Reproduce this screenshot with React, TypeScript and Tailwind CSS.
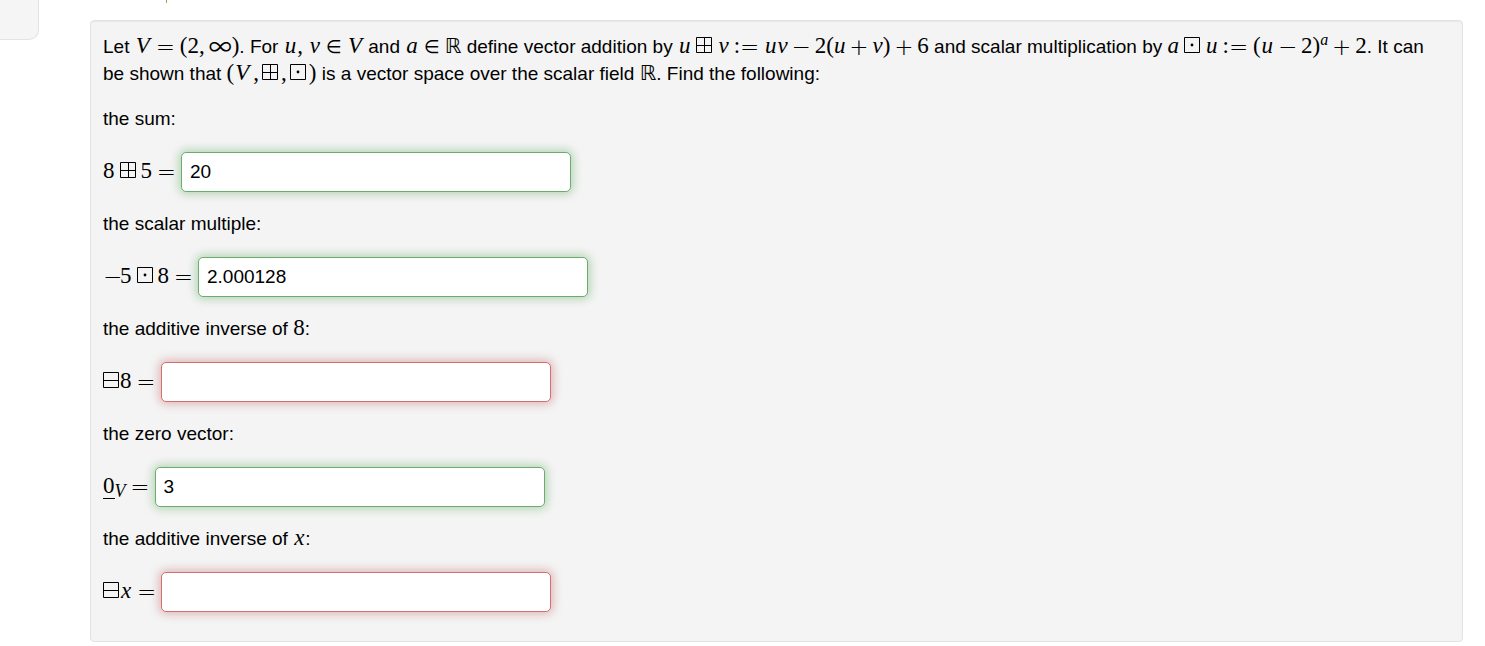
import React, { useState } from 'react';
import { clsx } from 'clsx';

type Children = { children: React.ReactNode };

function M({ children }: Children) {
  return (
    <span className="whitespace-nowrap font-['Liberation_Serif',serif] text-[23px] leading-none">
      {children}
    </span>
  );
}

function Var({ children }: Children) {
  return <i className="px-px">{children}</i>;
}

// Binary operator: + or −
function Bin({ children }: Children) {
  return (
    <span className="inline-block w-[27px] text-center align-[-2px] font-['DejaVu_Sans_Light','DejaVu_Sans',sans-serif] leading-none">
      {children}
    </span>
  );
}

function Eq() {
  return (
    <span className="inline-block w-[29px] text-center align-[-2px] font-['DejaVu_Sans_Light','DejaVu_Sans',sans-serif] leading-none">
      =
    </span>
  );
}

function Assign() {
  return (
    <>
      <span className="pl-1">:</span>
      <span className="inline-block w-6 align-[-2px] font-['DejaVu_Sans_Light','DejaVu_Sans',sans-serif] leading-none">=</span>
    </>
  );
}

function In() {
  return (
    <span className="inline-block w-[26px] text-center font-['DejaVu_Sans',sans-serif] text-[18px] leading-none">
      ∈
    </span>
  );
}

function Infinity() {
  return <span className="pl-1 align-[-2px] font-['Noto_Sans_CJK_SC',sans-serif] leading-none">∞</span>;
}

function Reals() {
  return <span className="font-['DejaVu_Sans',sans-serif] text-[21px] leading-none">ℝ</span>;
}

const shapes = {
  plus: { label: '⊞', path: 'M8.5 .5v15M.5 8.5h15' },
  minus: { label: '⊟', path: 'M.5 8.5h15' },
  dot: { label: '⊡', path: '' },
};

function Boxed({ op, className }: { op: keyof typeof shapes; className?: string }) {
  const shape = shapes[op];
  return (
    <svg
      role="img"
      aria-label={shape.label}
      viewBox="0 0 16 16"
      className={clsx('inline-block size-4 align-baseline', className)}
      fill="none"
      stroke="currentColor"
    >
      <path d="M.5.5h15v15H.5z" />
      {shape.path && <path d={shape.path} />}
      {op === 'dot' && <circle cx="8" cy="8" r="1.4" fill="currentColor" stroke="none" />}
    </svg>
  );
}

interface Question {
  id: string;
  prompt: React.ReactNode;
  lhs: React.ReactNode;
  answer: string;
  correct: boolean;
}

const questions: Question[] = [
  {
    id: 'sum',
    prompt: 'the sum:',
    lhs: <>8<Boxed op="plus" className="mx-[5px]" />5</>,
    answer: '20',
    correct: true,
  },
  {
    id: 'scalar-multiple',
    prompt: 'the scalar multiple:',
    lhs: (
      <>
        <span className="inline-block w-[17px] align-[-2px] font-['DejaVu_Sans_Light','DejaVu_Sans',sans-serif] leading-none">−</span>5
        <Boxed op="dot" className="mx-[5px]" />8
      </>
    ),
    answer: '2.000128',
    correct: true,
  },
  {
    id: 'inverse-8',
    prompt: <>the additive inverse of <M>8</M>:</>,
    lhs: <><Boxed op="minus" className="mr-px" />8</>,
    answer: '',
    correct: false,
  },
  {
    id: 'zero-vector',
    prompt: 'the zero vector:',
    lhs: (
      <>
        <span className="border-b border-black">0</span>
        <sub className="bottom-[-4px] text-[18px] italic">V</sub>
      </>
    ),
    answer: '3',
    correct: true,
  },
  {
    id: 'inverse-x',
    prompt: <>the additive inverse of <M><Var>x</Var></M>:</>,
    lhs: <><Boxed op="minus" className="mr-px" /><Var>x</Var></>,
    answer: '',
    correct: false,
  },
];

function AnswerRow({ question }: { question: Question }) {
  const [value, setValue] = useState(question.answer);

  return (
    <div className="flex items-center">
      <label htmlFor={question.id} className="shrink-0 pb-0.5">
        <M>
          {question.lhs}
          <Eq />
        </M>
      </label>
      <input
        id={question.id}
        type="text"
        value={value}
        onChange={(e) => setValue(e.target.value)}
        className={clsx(
          'h-10 w-[390px] min-w-0 rounded-[5px] border bg-white px-2 text-[19px] text-black outline-none',
          question.correct
            ? 'border-[#6aad6e] shadow-[0_0_10px_2px_rgba(81,163,81,0.4)]'
            : 'border-[#d07070] shadow-[0_0_10px_2px_rgba(191,84,84,0.4)]'
        )}
      />
    </div>
  );
}

export default function App() {
  return (
    <div className="flex items-start bg-white font-['Liberation_Sans',Arial,sans-serif] text-[19px] leading-[27px] text-black">
      <aside className="h-10 w-[39px] shrink-0 rounded-br-[10px] border-r border-b border-[#e3e3e3] bg-[#f5f5f5]" />

      <main className="mr-[22px] ml-[51px] min-w-0 flex-1">
        <div className="h-5 pl-[76px]">
          <div className="h-[3px] w-px bg-[#b8965a]" />
        </div>

        <section className="rounded border border-[#e3e3e3] bg-[#f4f4f4] pt-3 pr-5 pb-[29px] pl-3 shadow-[inset_0_1px_1px_rgba(0,0,0,0.05)]">
          <p>
            Let <M><Var>V</Var><Eq />(2,<Infinity />)</M>. For{' '}
            <M><Var>u</Var>,<Var> v</Var><In /><Var>V</Var></M> and{' '}
            <M><Var>a</Var><In /><Reals /></M> define vector addition by{' '}
            <M>
              <Var>u</Var><Boxed op="plus" className="mx-[5px]" /><Var>v</Var><Assign />
              <Var>u</Var><i>v</i><Bin>−</Bin>2(<i>u</i><Bin>+</Bin><i>v</i>)<Bin>+</Bin>6
            </M>{' '}
            and scalar multiplication by{' '}
            <M>
              <i>a</i><Boxed op="dot" className="mx-[5px]" /><Var>u</Var><Assign />
              (<Var>u</Var><Bin>−</Bin>2)
              <sup className="top-[-8px] text-[16px] italic">a</sup><Bin>+</Bin>2
            </M>
            . It can be shown that{' '}
            <M>
              (<Var>V</Var><span className="pl-[3px]">,</span><Boxed op="plus" className="mx-[3px]" />,
              <Boxed op="dot" className="mx-[3px]" />)
            </M>{' '}
            is a vector space over the scalar field <M><Reals /></M>. Find the following:
          </p>

          <div className="mt-[18px] space-y-[18px]">
            {questions.map((question) => (
              <div key={question.id} className="space-y-5">
                <p>{question.prompt}</p>
                <AnswerRow question={question} />
              </div>
            ))}
          </div>
        </section>
      </main>
    </div>
  );
}
